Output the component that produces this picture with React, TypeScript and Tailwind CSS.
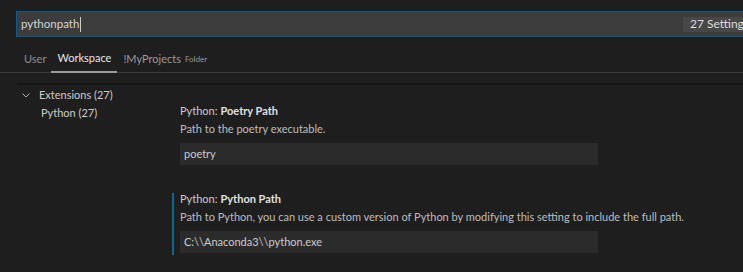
import React from "react";

const font = { fontFamily: 'Lato, "Noto Sans", sans-serif' };

export default function App() {
  return (
    <div className="w-[743px] h-[272px] bg-[#1e1e1e] text-[#cccccc] overflow-hidden text-[11px]" style={font}>
      {/* search */}
      <div className="pt-[11px] pl-[16px]">
        <div className="h-[26px] bg-[#3c3c3c] border border-[#0f5a8c] border-r-0 flex items-center pl-[4px] pr-0">
          <span className="text-[#d4d4d4] text-[11.5px] leading-none">pythonpath</span>
          <span className="w-px h-[15px] bg-[#cccccc] ml-px" />
          <div className="ml-auto h-[15px] bg-[#474747] pl-[7px] flex items-center text-[#dddddd] text-[12px] whitespace-nowrap w-[60px] overflow-hidden">
            27 Settings
          </div>
        </div>
      </div>
      {/* tabs */}
      <div className="mt-[9px] pl-[17px] border-b border-[#3a3a3a] h-[27px] flex items-stretch">
        <div className="pl-[7px] pr-[5px] flex items-center text-[#8f8f8f]">User</div>
        <div className="px-[6px] flex items-center text-[#e7e7e7] border-b-2 border-[#9a9a9a] -mb-px">Workspace</div>
        <div className="px-[6px] flex items-center text-[#9a9a9a]">
          !MyProjects<span className="ml-[4px] text-[8px] text-[#9a9a9a]">Folder</span>
        </div>
      </div>
      {/* body */}
      <div className="mt-[10px] ml-[17px] border-t-2 border-[#141414] flex">
        <div className="w-[155px] shrink-0 pt-[1px]">
          <div className="h-[18px] flex items-center pl-[5px]">
            <svg width="8" height="8" viewBox="0 0 16 16" className="mr-[9px]">
              <path d="M1 5l7 7 7-7" fill="none" stroke="#bbbbbb" strokeWidth="1.8" />
            </svg>
            <span>Extensions (27)</span>
          </div>
          <div className="h-[18px] flex items-center pl-[24px]">Python (27)</div>
        </div>
        <div className="flex-1 min-w-0 pt-[17px]">
          <div className="pl-[8px]">
            <div className="h-[18px] flex items-center">
              Python:<span className="font-bold ml-[3px] text-[#e0e0e0]">Poetry Path</span>
            </div>
            <div className="h-[18px] flex items-center text-[#bdbdbd]">Path to the poetry executable.</div>
            <div className="mt-[5px] w-[418px] h-[22px] bg-[#2b2b2b] flex items-center pl-[4px]">poetry</div>
          </div>
          <div className="mt-[28px] border-l-2 border-[#0c6a8f] pl-[6px] pb-[2px]">
            <div className="h-[12px] flex items-center">
              Python:<span className="font-bold ml-[3px] text-[#e0e0e0]">Python Path</span>
            </div>
            <div className="h-[24px] flex items-center text-[#bdbdbd] whitespace-nowrap">
              Path to Python, you can use a custom version of Python by modifying this setting to include the full path.
            </div>
            <div className="mt-[2px] w-[418px] h-[22px] bg-[#2b2b2b] flex items-center pl-[4px]">C:\\Anaconda3\\python.exe</div>
          </div>
        </div>
      </div>
    </div>
  );
}
